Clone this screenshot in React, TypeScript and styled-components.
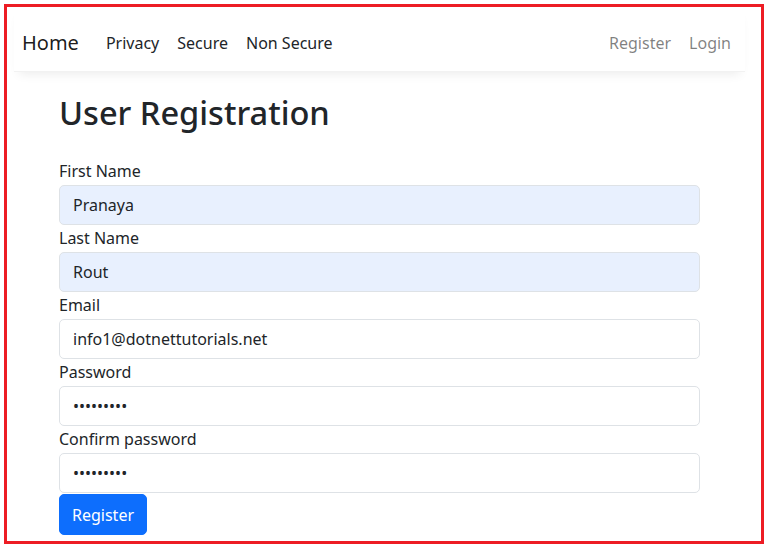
import React from 'react'
import styled, { createGlobalStyle } from 'styled-components'

const GlobalStyle = createGlobalStyle`
  * { box-sizing: border-box; }
  html, body {
    margin: 0;
    padding: 0;
    background: #fff;
    font-family: "Noto Sans", "Open Sans", sans-serif;
    color: #212529;
  }
`

const Frame = styled.div`
  margin: 4px 0 0 4px;
  width: 760px;
  height: 540px;
  border: 3px solid #ed1c24;
  padding: 0 16px 0 7px;
  overflow: hidden;
  background: #fff;
`

const Navbar = styled.nav`
  display: flex;
  align-items: center;
  height: 65px;
  padding: 7px 14px 0 8px;
  background: #fff;
  box-shadow: 0 7px 10px -5px rgba(0, 0, 0, 0.08);
  border-bottom: 1px solid #f2f2f2;
`

const Brand = styled.a`
  font-size: 20px;
  line-height: 30px;
  color: rgba(0, 0, 0, 0.9);
  text-decoration: none;
  margin-right: 27px;
`

const NavList = styled.ul<{ $grow?: boolean }>`
  display: flex;
  list-style: none;
  margin: 0;
  padding: 0;
  gap: 18px;
  flex: ${p => (p.$grow ? 1 : 'none')};
`

const NavLink = styled.a<{ $muted?: boolean }>`
  font-size: 16px;
  line-height: 24px;
  text-decoration: none;
  color: ${p => (p.$muted ? 'rgba(0, 0, 0, 0.5)' : '#212529')};
`

const Main = styled.main`
  padding: 21px 0 0 45px;
  width: 686px;
`

const Title = styled.h1`
  margin: 0 0 24px;
  font-size: 32.6px;
  line-height: 40px;
  font-weight: 500;
`

const Form = styled.form`
  display: flex;
  flex-direction: column;
`

const Label = styled.label`
  display: block;
  font-size: 16px;
  line-height: 28px;
`

const Input = styled.input<{ $filled?: boolean }>`
  display: block;
  width: 100%;
  height: 40px;
  margin-bottom: -1px;
  padding: 0 13px;
  font: inherit;
  font-size: 16px;
  color: #212529;
  background: ${p => (p.$filled ? '#e8f0fe' : '#fff')};
  border: 1px solid #dee2e6;
  border-radius: 5px;
  outline: none;
`

const Button = styled.button`
  align-self: flex-start;
  height: 41px;
  padding: 0 12px;
  font: inherit;
  font-size: 16px;
  color: #fff;
  background: #0d6efd;
  border: 1px solid #0d6efd;
  border-radius: 5px;
  margin-top: 2px;
`

const fields = [
  { label: 'First Name', type: 'text', value: 'Pranaya', filled: true },
  { label: 'Last Name', type: 'text', value: 'Rout', filled: true },
  { label: 'Email', type: 'email', value: 'info1@dotnettutorials.net' },
  { label: 'Password', type: 'password', value: 'Abc@12345' },
  { label: 'Confirm password', type: 'password', value: 'Abc@12345' },
]

export default function App() {
  return (
    <>
      <GlobalStyle />
      <Frame>
        <Navbar>
          <Brand href="#">Home</Brand>
          <NavList $grow>
            <li><NavLink href="#">Privacy</NavLink></li>
            <li><NavLink href="#">Secure</NavLink></li>
            <li><NavLink href="#">Non Secure</NavLink></li>
          </NavList>
          <NavList>
            <li><NavLink $muted href="#">Register</NavLink></li>
            <li><NavLink $muted href="#">Login</NavLink></li>
          </NavList>
        </Navbar>
        <Main>
          <Title>User Registration</Title>
          <Form onSubmit={e => e.preventDefault()}>
            {fields.map(f => (
              <div key={f.label}>
                <Label>{f.label}</Label>
                <Input type={f.type} defaultValue={f.value} $filled={f.filled} readOnly />
              </div>
            ))}
            <Button type="submit">Register</Button>
          </Form>
        </Main>
      </Frame>
    </>
  )
}
